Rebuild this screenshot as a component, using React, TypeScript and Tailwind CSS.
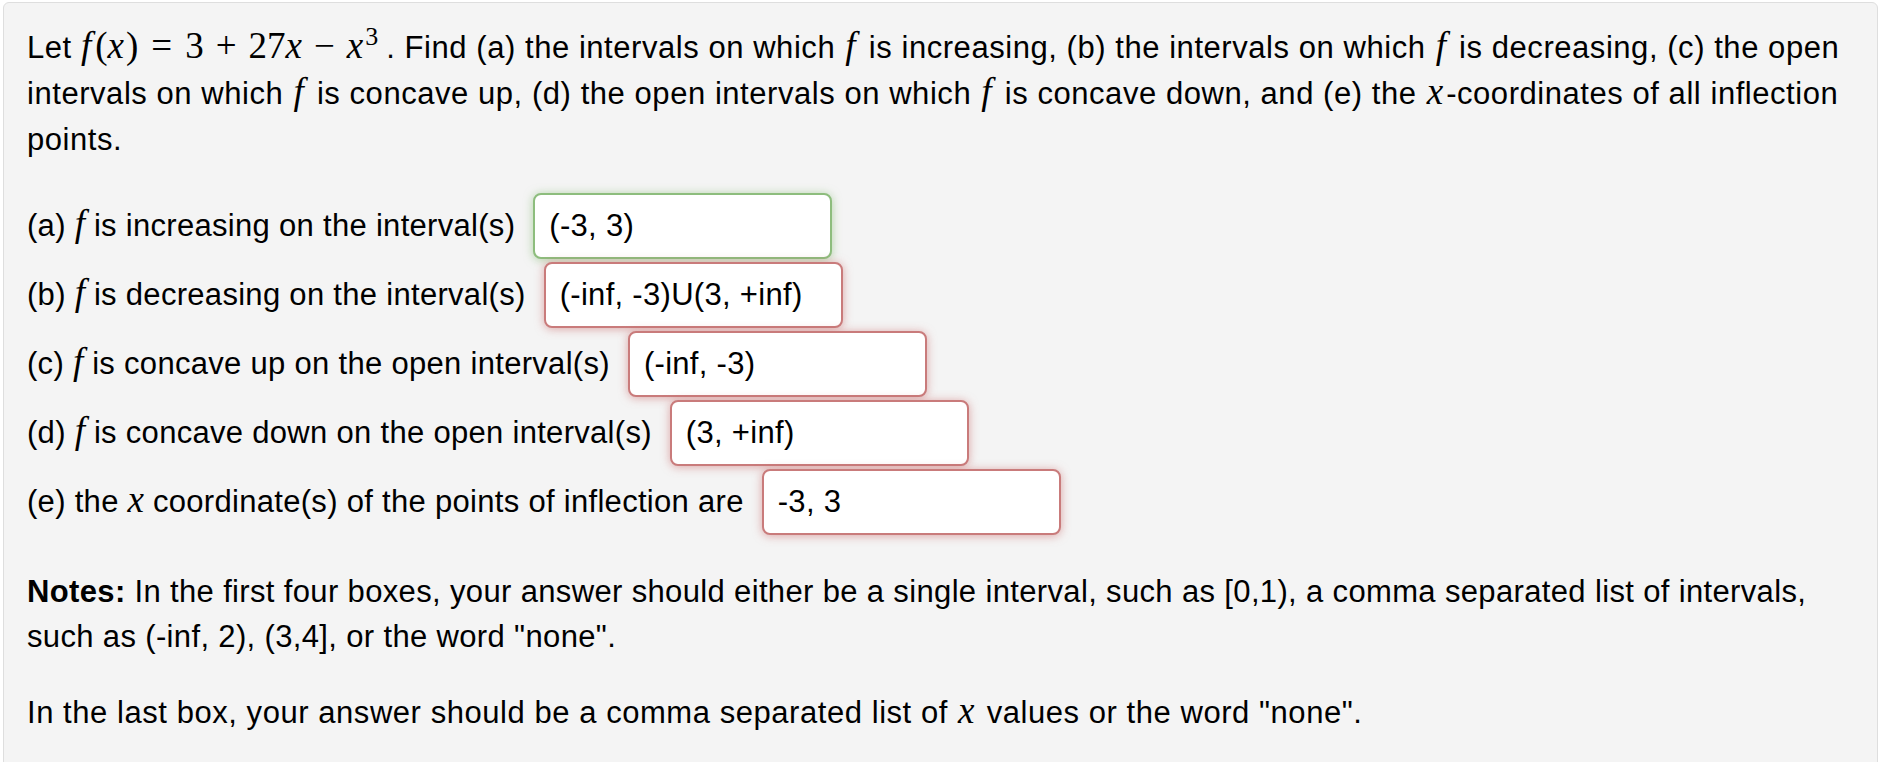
import type { ReactNode } from "react";

// math bits are set in a serif face, a touch larger than the body text
function M({ children }: { children: ReactNode }) {
  return (
    <span className="font-['Liberation_Serif',serif] text-[37px] leading-none tracking-normal">
      {children}
    </span>
  );
}

function V({ children }: { children: ReactNode }) {
  return <i className="italic">{children}</i>;
}

// inline f / x inside running text, with the extra room TeX gives them
function F() {
  return (
    <M>
      <i className="ml-[1px] mr-[4px] italic">f</i>
    </M>
  );
}

function X() {
  return (
    <M>
      <i className="ml-[1px] mr-[3px] italic">x</i>
    </M>
  );
}

type Answer = {
  label: ReactNode;
  value: string;
  correct: boolean;
};

const ANSWERS: Answer[] = [
  {
    label: (
      <>
        (a) <M><V>f</V></M> is increasing on the interval(s)
      </>
    ),
    value: "(-3, 3)",
    correct: true,
  },
  {
    label: (
      <>
        (b) <M><V>f</V></M> is decreasing on the interval(s)
      </>
    ),
    value: "(-inf, -3)U(3, +inf)",
    correct: false,
  },
  {
    label: (
      <>
        (c) <M><V>f</V></M> is concave up on the open interval(s)
      </>
    ),
    value: "(-inf, -3)",
    correct: false,
  },
  {
    label: (
      <>
        (d) <M><V>f</V></M> is concave down on the open interval(s)
      </>
    ),
    value: "(3, +inf)",
    correct: false,
  },
  {
    label: (
      <>
        (e) the <M><V>x</V></M> coordinate(s) of the points of inflection are
      </>
    ),
    value: "-3, 3",
    correct: false,
  },
];

function AnswerRow({ label, value, correct }: Answer) {
  return (
    <div className="flex h-[69px] items-center gap-[18px]">
      <span className="whitespace-nowrap tracking-[0.3px]">{label}</span>
      <input
        readOnly
        defaultValue={value}
        className={
          correct
            ? "h-[66px] w-[299px] rounded-[8px] border-2 border-[#8dbd7d] bg-white px-[14px] text-[31px] tracking-[0.3px] text-black shadow-[0_1px_10px_rgba(120,180,100,0.55)] outline-none"
            : "h-[66px] w-[299px] rounded-[8px] border-2 border-[#c97b7b] bg-white px-[14px] text-[31px] tracking-[0.3px] text-black shadow-[0_1px_10px_rgba(200,100,100,0.55)] outline-none"
        }
      />
    </div>
  );
}

export default function App() {
  return (
    <div className="min-h-screen bg-white pl-[3px] pr-[8px] pt-[2px] font-['Liberation_Sans',Arial,sans-serif] text-[31px] leading-[45px] text-black">
      <div className="rounded-[6px] border border-[#dedede] bg-[#f4f4f4] pb-[34px] pl-[23px] pr-[20px] pt-[22px]">
        <p className="leading-[46px] tracking-[0.55px]">
          Let{" "}
          <M>
            <V>f</V>
            <span className="ml-[4px]">(</span>
            <V>x</V>
            <span className="ml-[2px]">)</span>
            <span className="mx-[13px]">=</span>3<span className="mx-[12px]">+</span>27
            <V>x</V>
            <span className="mx-[12px]">−</span>
            <V>x</V>
            <sup className="ml-[2px] mr-[8px] text-[26px]">3</sup>
          </M>
          . Find (a) the intervals on which <F /> is increasing, (b) the intervals on which <F /> is
          decreasing, (c) the open intervals on which <F /> is concave up, (d) the open intervals on
          which <F /> is concave down, and (e) the <X />-coordinates of all inflection points.
        </p>

        <div className="mt-[28px] flex flex-col">
          {ANSWERS.map((a, i) => (
            <AnswerRow key={i} {...a} />
          ))}
        </div>

        <p className="mt-[33px] tracking-[0.35px]">
          <b className="font-bold">Notes:</b> In the first four boxes, your answer should either be a
          single interval, such as [0,1), a comma separated list of intervals, such as (-inf, 2),
          (3,4], or the word "none".
        </p>

        <p className="mt-[31px] tracking-[0.55px]">
          In the last box, your answer should be a comma separated list of <X /> values or the word
          "none".
        </p>
      </div>
    </div>
  );
}
